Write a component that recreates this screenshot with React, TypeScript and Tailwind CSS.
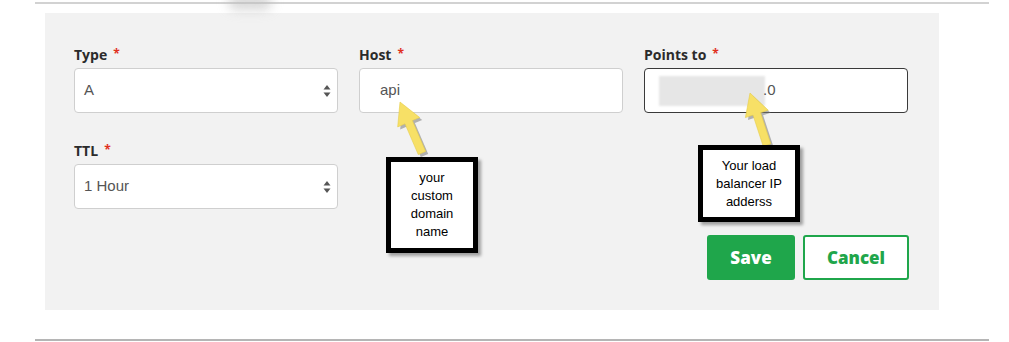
import type { ReactNode } from 'react';

const sans = { fontFamily: '"Liberation Sans", Arial, sans-serif' };
const head = { fontFamily: '"Open Sans", "Liberation Sans", sans-serif' };

function Label({ children }: { children: ReactNode }) {
  return (
    <div className="mb-[4px] flex h-[20px] items-center text-[14px] font-bold text-[#2b2b2b]" style={head}>
      {children}
      <span className="ml-[6px] text-[12px] text-[#e0301e]">*</span>
    </div>
  );
}

function SelectBox({ value }: { value: string }) {
  return (
    <div
      className="flex h-[45px] items-center justify-between rounded-[4px] border border-[#cfcfcf] bg-white pl-[9px] pr-[6px] text-[15px] text-[#555]"
      style={sans}
    >
      <span>{value}</span>
      <svg width="8" height="14" viewBox="0 0 8 14" className="text-[#555]">
        <path d="M4 1 L7.5 5.5 L0.5 5.5 Z" fill="currentColor" />
        <path d="M4 13 L7.5 8.5 L0.5 8.5 Z" fill="currentColor" />
      </svg>
    </div>
  );
}

function Callout({ className, lines }: { className: string; lines: string[] }) {
  return (
    <div
      className={`absolute flex flex-col items-center justify-center border-[5px] border-black bg-white text-center text-[13px] leading-[18px] text-black shadow-[3px_3px_3px_rgba(0,0,0,0.35)] ${className}`}
      style={sans}
    >
      {lines.map((l) => (
        <span key={l}>{l}</span>
      ))}
    </div>
  );
}

export default function App() {
  return (
    <div className="relative h-[342px] w-[1009px] overflow-hidden bg-white">
      {/* faint shadow under the top rule */}
      <div className="absolute left-[228px] top-[-6px] h-[16px] w-[44px] rounded-full bg-[#bdbdbd] opacity-60 blur-[6px]" />

      <div className="ml-[35px] mt-[2px] h-[2px] w-[954px] bg-[#d2d2d2]" />

      <div className="ml-[45px] mt-[9px] w-[894px] bg-[#f2f2f2] px-[29px] pb-[30px] pt-[31px]">
        <div className="grid grid-cols-[264px_264px_264px] gap-x-[21px]">
          <div>
            <Label>Type</Label>
            <SelectBox value="A" />
          </div>
          <div>
            <Label>Host</Label>
            <div
              className="flex h-[45px] items-center rounded-[4px] border border-[#cfcfcf] bg-white pl-[20px] text-[15px] text-[#555]"
              style={sans}
            >
              api
            </div>
          </div>
          <div>
            <Label>Points to</Label>
            <div
              className="relative flex h-[45px] items-center rounded-[4px] border border-[#3a3a3a] bg-white pl-[118px] text-[15px] text-[#555]"
              style={sans}
            >
              <div className="absolute left-[14px] top-[7px] h-[30px] w-[106px] bg-[#e6e6e6] blur-[1px]" />
              <span className="relative">.0</span>
            </div>
          </div>

          <div className="mt-[27px]">
            <Label>TTL</Label>
            <SelectBox value="1 Hour" />
          </div>
        </div>

        <div className="mt-[26px] flex justify-end gap-[8px] pr-[1px]">
          <button
            className="h-[45px] w-[88px] rounded-[3px] bg-[#1fa64b] text-[17px] font-extrabold text-white"
            style={head}
          >
            Save
          </button>
          <button
            className="h-[45px] w-[106px] rounded-[3px] border-2 border-[#1fa64b] bg-white text-[17px] font-extrabold text-[#1fa64b]"
            style={head}
          >
            Cancel
          </button>
        </div>
      </div>

      <div className="ml-[35px] mt-[29px] h-[2px] w-[954px] bg-[#b5b5b5]" />

      {/* annotation arrows */}
      <svg className="pointer-events-none absolute left-0 top-0" width="1009" height="342">
        <g transform="translate(2.5 2.5)" fill="#7a7a7a" opacity="0.55">
          <polygon points="400,102 419.7,117.5 412.4,120.6 425.7,151.4 418.3,154.6 405,123.8 397.7,126.9" />
          <polygon points="750,93 768.2,110.2 760.6,112.7 770.8,143.8 763.2,146.2 753,115.1 745.4,117.6" />
        </g>
        <g fill="#f7e066" stroke="#e6cc4a" strokeWidth="0.6">
          <polygon points="400,102 419.7,117.5 412.4,120.6 425.7,151.4 418.3,154.6 405,123.8 397.7,126.9" />
          <polygon points="750,93 768.2,110.2 760.6,112.7 770.8,143.8 763.2,146.2 753,115.1 745.4,117.6" />
        </g>
      </svg>

      <Callout className="left-[386px] top-[157px] h-[96px] w-[92px]" lines={['your', 'custom', 'domain', 'name']} />
      <Callout className="left-[698px] top-[145px] h-[77px] w-[102px]" lines={['Your load', 'balancer IP', 'adderss']} />
    </div>
  );
}
